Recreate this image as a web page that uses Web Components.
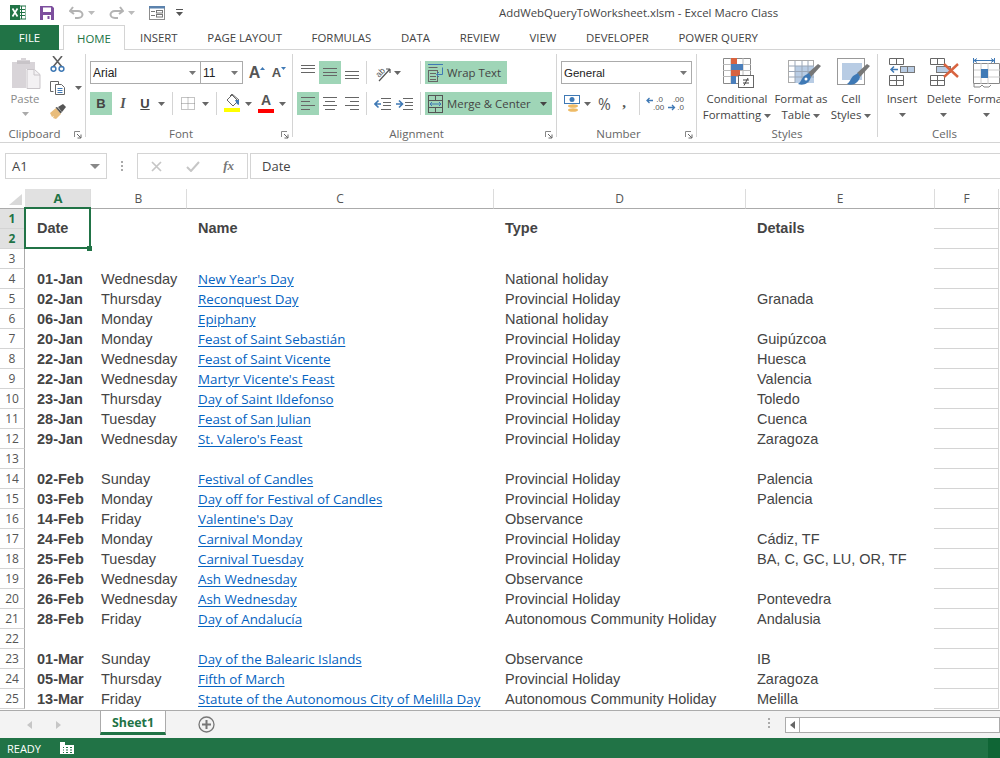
<!DOCTYPE html>
<html><head><meta charset="utf-8"><style>
html,body{margin:0;padding:0;background:#fff}
body{width:1000px;height:758px;overflow:hidden;font-family:"Open Sans","Noto Sans",sans-serif}
xl-app{display:block}
</style></head><body>
<xl-app></xl-app>
<script>
const svg=(w,h,body,extra='')=>`<svg width="${w}" height="${h}" viewBox="0 0 ${w} ${h}" style="display:block;flex:none;${extra}">${body}</svg>`;
const caret=(c='#666')=>svg(7,4,`<path d="M0 0h7L3.5 4z" fill="${c}"/>`);
const lines=(w,arr,c='#666')=>svg(w,16,arr.map(a=>`<rect x="${a[0]}" y="${a[1]}" width="${a[2]}" height="1" fill="${c}"/>`).join(''));
const I={
 excel:svg(16,15,`<rect x="7" y="1" width="9" height="13" fill="#fff" stroke="#217346"/><path d="M8 4.5h7M8 7.5h7M8 10.5h7M11.5 1v13" stroke="#217346" stroke-width="1"/><rect x="0" y="0" width="10" height="15" fill="#217346"/><path d="M2.5 3.5L7.5 11.5M7.5 3.5L2.5 11.5" stroke="#fff" stroke-width="1.7"/>`),
 save:svg(14,14,`<path d="M0 0h12l2 2v12H0z" fill="#7d4f9e"/><rect x="3" y="1.5" width="8" height="4.5" fill="#fff"/><rect x="3" y="9" width="8" height="5" fill="#fff"/><rect x="7.5" y="10" width="2" height="3" fill="#7d4f9e"/>`),
 undo:svg(15,13,`<path d="M4 1L1 5l4 3" fill="none" stroke="#b3b3b3" stroke-width="2"/><path d="M1.5 5H9c3 0 4.500 2 4.500 3.500S12 12 9 12H6" fill="none" stroke="#b3b3b3" stroke-width="2"/>`),
 redo:svg(15,13,`<g transform="matrix(-1 0 0 1 15 0)"><path d="M4 1L1 5l4 3" fill="none" stroke="#b3b3b3" stroke-width="2"/><path d="M1.5 5H9c3 0 4.500 2 4.500 3.500S12 12 9 12H6" fill="none" stroke="#b3b3b3" stroke-width="2"/></g>`),
 form:svg(16,14,`<rect x=".5" y=".5" width="15" height="13" fill="#fff" stroke="#8c8c8c"/><rect x="0" y="0" width="16" height="2.500" fill="#5b82ad"/><path d="M2 5.500h4M2 9.500h4" stroke="#777"/><rect x="7.500" y="4.500" width="6" height="2.500" fill="none" stroke="#777"/><rect x="7.500" y="8.500" width="6" height="2.500" fill="none" stroke="#777"/>`),
 qat:svg(7,8,`<rect width="7" height="1" fill="#555"/><path d="M0 3h7L3.500 7z" fill="#555"/>`),
 launcher:svg(8,8,`<path d="M.5 6V.5H6" fill="none" stroke="#888"/><path d="M3 3l4 4M7 3.500V7H3.500" fill="none" stroke="#666"/>`),
 paste:svg(29,31,`<path d="M0 4h5V2h4V0h5v2h4v2h5v7h-9v19H0z" fill="#d8d4d8"/><path d="M5 3h13v3H5z" fill="#c8c4c8"/><path d="M15 11.500h7.500l5.500 5v14H15z" fill="#f3f1f3" stroke="#c9c5c9"/><path d="M22 11.500v5.500h6" fill="none" stroke="#c9c5c9"/>`),
 cut:svg(15,16,`<path d="M3 0l9 11M12 0L3 11" stroke="#5f5f5f" stroke-width="1.600" fill="none"/><circle cx="3.500" cy="12.800" r="2.400" fill="none" stroke="#3f79b5" stroke-width="1.500"/><circle cx="11.500" cy="12.800" r="2.400" fill="none" stroke="#3f79b5" stroke-width="1.500"/>`),
 copy:svg(16,14,`<path d="M.5.500h8v3M.5.500v10h3" fill="none" stroke="#666"/><path d="M5.500 3.500h6l3 3v7h-9z" fill="#fff" stroke="#666"/><path d="M7.500 7.500h5M7.500 9.500h5M7.500 11.500h5" stroke="#3f79b5"/>`),
 brush:svg(16,15,`<path d="M0 9l6-5 5 6-5 5-3-1 1-2-2 1z" fill="#e9bd7c"/><path d="M5.500 3.500l5 6 1.500-1.500-5-5z" fill="#555"/><path d="M8 3l5-3 3 3-4 5z" fill="#555"/>`),
 borders:svg(14,13,`<path d="M.5.500h13v12H.5zM7 .5v12M.5 6.500h13" fill="none" stroke="#888" stroke-dasharray="1 1"/>`),
 fill:svg(17,20,`<path d="M8 1l6 6-5 5-6-6z" fill="#fff" stroke="#666"/><path d="M6 2l2-2 7 6" fill="none" stroke="#666"/><path d="M11 6h4v5l-2-1z" fill="#3f79b5"/><rect x="0" y="14" width="16" height="4" fill="#ffff00"/>`),
 color:`<div style="font:700 14px 'Liberation Sans';line-height:13px;color:#555;width:16px;text-align:center;border-bottom:4px solid #f00;height:15px;">A</div>`,
 orient:svg(20,18,`<text x="3" y="11" font-family="Liberation Sans" font-size="8.500" fill="#555" transform="rotate(-45 8 9)">ab</text><path d="M6 17L17 5M17 5h-4M17 5v4" fill="none" stroke="#555" stroke-width="1.200"/>`),
 wrap:svg(16,18,`<rect x=".5" y="6.500" width="9" height="11" fill="none" stroke="#666"/><path d="M.5 3.500h9M2 9.500h6M2 12.500h6M2 15.500h6" stroke="#666"/><path d="M0 .5h15" stroke="#3f79b5"/><path d="M14.500 3.500v7H9M11 8l-2.500 2.500L11 13" fill="none" stroke="#3f79b5"/>`),
 merge:svg(15,18,`<rect x=".5" y=".5" width="14" height="17" fill="none" stroke="#555"/><path d="M1 5.500h13M1 12.500h13M7.500 1v4M7.500 13v4" stroke="#555"/><path d="M2 9h11M4 7L2 9l2 2M11 7l2 2-2 2" fill="none" stroke="#3f79b5"/>`),
 indL:svg(17,12,`<path d="M7 .5h10M9 4.500h8M9 7.500h8M7 11.500h10" stroke="#666"/><path d="M7 6H1M4.500 2.500L1 6l3.500 3.500" fill="none" stroke="#3f79b5" stroke-width="1.600"/>`),
 indR:svg(17,12,`<path d="M7 .5h10M9 4.500h8M9 7.500h8M7 11.500h10" stroke="#666"/><path d="M0 6h6M3 2.500L6.500 6 3 9.500" fill="none" stroke="#3f79b5" stroke-width="1.600"/>`),
 acct:svg(17,17,`<rect x=".5" y=".5" width="15" height="8" fill="#fff" stroke="#3f79b5"/><circle cx="8" cy="4.500" r="2.500" fill="#3f79b5"/><ellipse cx="9" cy="11" rx="5" ry="1.800" fill="#eebb66"/><ellipse cx="9" cy="15" rx="5" ry="1.800" fill="#eebb66"/>`),
 incD:`<div style="display:flex;align-items:flex-start;font:8px/8px 'Liberation Sans';color:#555;height:16px"><div style="width:7px;margin-top:1px">${svg(7,7,'<path d="M7 3.500H1M3.500 1L1 3.500 3.500 6" fill="none" stroke="#3f79b5" stroke-width="1.300"/>')}</div><div style="text-align:right;width:10px">.0<br>.00</div></div>`,
 decD:`<div style="display:flex;align-items:flex-start;font:8px/8px 'Liberation Sans';color:#555;height:16px"><div style="width:16px"><div style="text-align:right">.00</div><div style="display:flex;justify-content:space-between">${svg(8,7,'<path d="M0 3.500h6.500M4 1l2.500 2.500L4 6" fill="none" stroke="#3f79b5" stroke-width="1.300"/>')}<span>.0</span></div></div></div>`,
 cf:svg(31,30,`<path d="M.5.500h27v25H.5z" fill="#fff" stroke="#888"/><path d="M8 0v26M20 0v26M0 6.500h28M0 12.500h28M0 18.500h28" stroke="#bbb"/><rect x="8" y="0" width="6" height="6" fill="#d8633f"/><rect x="8" y="6" width="12" height="6" fill="#4a7ebb"/><rect x="8" y="12" width="9" height="6" fill="#d8633f"/><rect x="8" y="18" width="5" height="8" fill="#4a7ebb"/><rect x="15.500" y="17.500" width="15" height="12" fill="#fff" stroke="#666"/><path d="M20 22h6M20 25h6M25 20l-4 7.500" stroke="#444" fill="none"/>`),
 fat:svg(33,30,`<rect x=".5" y="2.500" width="25" height="22" fill="#fff" stroke="#aaa"/><rect x="7" y="8" width="19" height="17" fill="#b8cce4"/><path d="M7 3v22M14 3v22M20 3v22M1 8h25M1 13.500h25M1 19h25" stroke="#9aa7b8"/><path d="M33 8l-3-2-10 9 3 4z" fill="#777"/><path d="M21 15l-5 3c-2 2-3 6-6 8 5 2 11 0 13-7z" fill="#3f79b5"/><circle cx="18" cy="21" r="1.500" fill="#fff"/>`),
 cst:svg(33,30,`<rect x=".5" y=".5" width="27" height="26" fill="#fff" stroke="#999"/><rect x="5" y="5" width="20" height="17" fill="#b8cce4"/><path d="M33 8l-3-2-10 9 3 4z" fill="#777"/><path d="M21 15l-5 3c-2 2-3 6-6 8 5 2 11 0 13-7z" fill="#3f79b5"/>`),
 ins:svg(27,28,`<path d="M.5.500h14v6H.5zM7.500 .5v6M.5 17.500h14v10H.5zM7.500 17.500v10M.5 22.500h14" fill="#fff" stroke="#666"/><rect x="11.500" y="8.500" width="14" height="6" fill="#b8cce4" stroke="#777"/><path d="M18.500 8.500v6" stroke="#777"/><path d="M9 11.500H2M5 8.500l-3 3 3 3" fill="none" stroke="#3f79b5" stroke-width="1.500"/>`),
 del:svg(30,28,`<path d="M.5.500h14v6H.5zM7.500 .5v6M.5 17.500h14v10H.5zM7.500 17.500v10M.5 22.500h14" fill="#fff" stroke="#666"/><rect x="6.500" y="8.500" width="14" height="6" fill="#b8cce4" stroke="#777"/><path d="M14 6l14 13M28 6L14 19" stroke="#d8633f" stroke-width="2.400"/>`),
 fmtc:svg(28,30,`<path d="M.5 0v5M21.500 0v5M1 2.500h20M4 .5L1 2.500l3 2M18 .5l3 2-3 2" fill="none" stroke="#3f79b5"/><path d="M.5 5.500h26v20H.5z" fill="#fff" stroke="#888"/><path d="M8 5v21M15 5v21M1 12h26M1 19h26" stroke="#ccc"/><rect x="8" y="11" width="7" height="9" fill="#3f79b5"/><path d="M1 26v3h6l2-2 2 2h5l2-2" fill="none" stroke="#888"/>`),
 x:svg(11,11,`<path d="M1 1l9 9M10 1l-9 9" stroke="#c6c6c6" stroke-width="1.700"/>`),
 check:svg(14,11,`<path d="M1 6l4 4 8-9" fill="none" stroke="#c6c6c6" stroke-width="2"/>`),
 larrow:svg(5,8,`<path d="M5 0v8L0 4z" fill="#c6c6c6"/>`),
 rarrow:svg(5,8,`<path d="M0 0v8l5-4z" fill="#c6c6c6"/>`),
 plus:svg(17,17,`<circle cx="8.500" cy="8.500" r="7.500" fill="none" stroke="#777" stroke-width="1.300"/><path d="M8.500 4v9M4 8.500h9" stroke="#777" stroke-width="2"/>`),
 status:svg(14,12,`<rect x="0" y="0" width="5" height="3" fill="#fff"/><path d="M0 3h14v9H0z" fill="#fff"/><path d="M3 5.500h1M6 5.500h2M10 5.500h2M3 8h1M6 8h2M10 8h2M3 10.500h1M6 10.500h2M10 10.500h2" stroke="#217346"/>`)
};
function def(name,html,after){customElements.define(name,class extends HTMLElement{constructor(){super();this.attachShadow({mode:'open'}).innerHTML=typeof html==='function'?html(this):html;}connectedCallback(){if(after)after(this)}})}

def('xl-titlebar',`<style>:host{display:flex;height:25px;align-items:center;position:relative;font:11.400px/25px "Open Sans",sans-serif;color:#444}
.i{display:flex;flex:none;align-items:center}.t{position:absolute;left:499px;top:0;white-space:nowrap}</style>
<div class="i" style="margin-left:10px">${I.excel}</div>
<div class="i" style="margin-left:14px">${I.save}</div>
<div class="i" style="margin-left:15px">${I.undo}</div>
<div class="i" style="margin-left:4px">${caret('#bbb')}</div>
<div class="i" style="margin-left:14px">${I.redo}</div>
<div class="i" style="margin-left:4px">${caret('#bbb')}</div>
<div class="i" style="margin-left:14px">${I.form}</div>
<div class="i" style="margin-left:11px">${I.qat}</div>
<div class="t"><slot></slot></div>`);

def('xl-tabs',`<style>:host{display:flex;height:25px;box-sizing:border-box;border-bottom:1px solid #d4d4d4;font:11.400px/25px "Open Sans",sans-serif;color:#444;white-space:nowrap}
.f{width:59px;height:25px;background:#217346;color:#fff;text-align:center;flex:none}
.h{width:62px;margin-left:4px;height:25px;box-sizing:border-box;background:#fff;border:1px solid #d4d4d4;border-bottom:0;color:#217346;text-align:center;flex:none;margin-right:15px}
::slotted(span){margin-right:29.700px}</style>
<div class="f">FILE</div><div class="h">HOME</div><slot></slot>`);

def('xl-group',h=>`<style>:host{display:flex;flex-direction:column;flex:none;box-sizing:border-box;height:83px;border-right:1px solid #d4d4d4;width:${h.getAttribute('w')}px;padding-left:${h.getAttribute('pl')||0}px;position:relative}
.c{flex:1;min-height:0}.l{position:absolute;left:0;right:${h.hasAttribute('launch')?16:0}px;bottom:-5px;text-align:center;font:11.500px/16px "Open Sans",sans-serif;color:#666;white-space:nowrap}
.k{position:absolute;right:3px;bottom:-2px}</style>
<div class="c"><slot></slot></div><div class="l">${h.getAttribute('label')}</div>${h.hasAttribute('launch')?`<div class="k">${I.launcher}</div>`:''}`);

def('xl-btn',h=>`<style>:host{display:flex;flex:none;align-items:center;justify-content:center;height:23px;width:${h.getAttribute('w')||22}px;margin-left:${h.getAttribute('ml')||0}px;${h.hasAttribute('on')?'background:#9fd5b7;':''}color:#444;white-space:nowrap}</style><slot></slot>`);

def('xl-combo',h=>`<style>:host{display:flex;flex:none;box-sizing:border-box;align-items:center;height:23px;width:${h.getAttribute('w')}px;border:1px solid #ababab;background:#fff;padding:0 4px 0 2px;justify-content:space-between;font:${h.getAttribute('f')||'12px'} "Liberation Sans",sans-serif;color:#222;margin-left:${h.getAttribute('ml')||0}px}</style><slot></slot>${caret('#777')}`);

def('xl-big',h=>`<style>:host{display:flex;flex:none;flex-direction:column;align-items:center;width:${h.getAttribute('w')}px;font:11.400px/16px "Open Sans",sans-serif;color:#444;white-space:nowrap;text-align:center}
.i{height:37px;display:flex;align-items:flex-start;padding-top:${h.getAttribute('pt')||4}px;box-sizing:border-box;margin-left:${h.getAttribute('ix')||0}px}
</style><div class="i">${I[h.getAttribute('icon')]}</div><div><slot></slot></div>`);

const cr=caret('#666');
const al={
 top:lines(14,[[0,0,14],[0,3,14],[0,7,14]]),
 mid:lines(14,[[0,3,14],[0,7,14],[0,10,14]]),
 bot:lines(14,[[0,6,14],[0,10,14],[0,13,14]]),
 l:lines(14,[[0,1,14],[0,5,9],[0,9,14],[0,13,9]]),
 c:lines(14,[[0,1,14],[2,5,10],[0,9,14],[2,13,10]]),
 r:lines(14,[[0,1,14],[5,5,9],[0,9,14],[5,13,9]])
};
const div=(ml)=>`<div class="d" style="margin-left:${ml}px"></div>`;
const tc=`<span style="display:inline-block;vertical-align:middle;margin-left:3px">${cr}</span>`;
def('xl-ribbon',`<style>:host{display:flex;height:93px;box-sizing:border-box;border-bottom:1px solid #d4d4d4;padding-top:4px;overflow:hidden;background:#fff}
.r{display:flex;align-items:center;height:23px;font:11.400px "Open Sans",sans-serif;color:#444}
.r1{margin-top:7px}.r2{margin-top:8px}
.d{width:1px;height:23px;background:#d4d4d4;flex:none}
.col{display:flex;flex-direction:column;align-items:center;flex:none;font:11.400px/16px "Open Sans",sans-serif;color:#444}
.flexr{display:flex}
.sm{display:flex;flex-direction:column;flex:none;margin-left:8px;gap:9px;margin-top:2px}
.sm>div{display:flex;align-items:center;height:15px;gap:9px}
.grey{color:#8a8a8a}
.big{font:700 16px "Liberation Sans";color:#555}
b{font:700 13px "Liberation Sans";color:#444}
i{font:italic 700 14px "Liberation Serif";color:#555}
u{font:700 13px "Liberation Sans";color:#444}
.cd{display:flex;justify-content:center;height:16px;align-items:center}
</style>
<xl-group w="86" label="Clipboard" launch>
 <div class="flexr">
  <div class="col grey" style="width:50px"><div style="margin:4px 0 0 3px;height:33px">${I.paste}</div><div>Paste</div><div style="margin-top:5px">${caret('#aaa')}</div></div>
  <div class="sm" style="margin-left:0"><div>${I.cut}</div><div>${I.copy}${cr}</div><div>${I.brush}</div></div>
 </div>
</xl-group>
<xl-group w="207" pl="4" label="Font" launch>
 <div class="r r1"><xl-combo w="111" f="12px">Arial</xl-combo><xl-combo w="43" ml="-1" f="12px">11</xl-combo>
  <xl-btn w="16" ml="6"><span class="big">A</span><span style="margin-top:-9px">${svg(5,3,'<path d="M0 3h5L2.500 0z" fill="#3f79b5"/>')}</span></xl-btn>
  <xl-btn w="16" ml="6"><span class="big" style="font-size:13px">A</span><span style="margin-top:-9px">${svg(5,3,'<path d="M0 0h5L2.500 3z" fill="#3f79b5"/>')}</span></xl-btn></div>
 <div class="r r2"><xl-btn on><b>B</b></xl-btn><xl-btn><i>I</i></xl-btn><xl-btn><u>U</u></xl-btn><xl-btn w="10">${cr}</xl-btn>
  ${div(6)}<xl-btn w="14" ml="8">${I.borders}</xl-btn><xl-btn w="20">${cr}</xl-btn>
  ${div(1)}<xl-btn w="17" ml="7">${I.fill}</xl-btn><xl-btn w="15">${cr}</xl-btn>
  <xl-btn w="16" ml="2">${I.color}</xl-btn><xl-btn w="16">${cr}</xl-btn></div>
</xl-group>
<xl-group w="264" pl="4" label="Alignment" launch>
 <div class="r r1"><xl-btn>${al.top}</xl-btn><xl-btn on>${al.mid}</xl-btn><xl-btn>${al.bot}</xl-btn>
  ${div(3)}<xl-btn w="20" ml="6">${I.orient}</xl-btn><xl-btn w="9">${cr}</xl-btn>
  ${div(18)}<xl-btn w="82" ml="4" on><span style="display:flex;gap:3px;align-items:center;width:100%;padding-left:3px">${I.wrap}Wrap Text</span></xl-btn></div>
 <div class="r r2"><xl-btn on>${al.l}</xl-btn><xl-btn>${al.c}</xl-btn><xl-btn>${al.r}</xl-btn>
  ${div(3)}<xl-btn w="17" ml="7">${I.indL}</xl-btn><xl-btn w="17" ml="5">${I.indR}</xl-btn>
  ${div(7)}<xl-btn w="127" ml="4" on><span style="display:flex;gap:4px;align-items:center;width:100%;padding:0 5px 0 3px;box-sizing:border-box">${I.merge}<span style="flex:1">Merge &amp; Center</span>${caret('#444')}</span></xl-btn></div>
</xl-group>
<xl-group w="140" pl="4" label="Number" launch>
 <div class="r r1"><xl-combo w="131" f="11.500px">General</xl-combo></div>
 <div class="r r2"><xl-btn w="17" ml="3">${I.acct}</xl-btn><xl-btn w="12">${cr}</xl-btn>
  <xl-btn w="15" ml="4"><span style="font:15.500px 'Open Sans';color:#555">%</span></xl-btn>
  <xl-btn w="8" ml="8"><span style="font:900 15px 'Liberation Serif';color:#555;margin-top:-3px">,</span></xl-btn>
  ${div(11)}<xl-btn w="17" ml="6">${I.incD}</xl-btn><xl-btn w="16" ml="5">${I.decD}</xl-btn></div>
</xl-group>
<xl-group w="181" pl="6" label="Styles">
 <div class="flexr">
  <xl-big w="68" icon="cf" ix="2">Conditional<br>Formatting${tc}</xl-big>
  <xl-big w="60" icon="fat" ix="6">Format as<br>Table${tc}</xl-big>
  <xl-big w="40" icon="cst" ix="5">Cell<br>Styles${tc}</xl-big>
 </div>
</xl-group>
<xl-group w="134" pl="4" label="Cells">
 <div class="flexr">
  <xl-big w="40" icon="ins" ix="1">Insert<div class="cd">${cr}</div></xl-big>
  <xl-big w="40" icon="del" ix="1" style="margin-left:2px">Delete<div class="cd">${cr}</div></xl-big>
  <xl-big w="42" icon="fmtc" style="margin-left:2px">Format<div class="cd">${cr}</div></xl-big>
 </div>
</xl-group>`);

def('xl-formula',`<style>:host{display:flex;height:46px;box-sizing:border-box;padding:10px 0 10px 5px;align-items:stretch;font:13px "Open Sans",sans-serif;color:#444}
.b{box-sizing:border-box;height:26px;border:1px solid #d4d4d4;display:flex;align-items:center;flex:none}
.n{width:102px;padding:0 6px;justify-content:space-between}
.dots{width:30px;display:flex;flex-direction:column;align-items:center;justify-content:center;gap:2px;flex:none}
.dots s{width:2px;height:2px;background:#aaa}
.fx{width:111px;justify-content:space-between;padding:0 13px;}
fxi{font:italic 700 13px "Liberation Serif";color:#777}
.v{flex:1;margin-left:2px;padding-left:11px;border-right:0}</style>
<div class="b n">A1${svg(10,5,'<path d="M0 0h10L5 5z" fill="#888"/>')}</div>
<div class="dots"><s></s><s></s><s></s></div>
<div class="b fx">${I.x}${I.check}<fxi>fx</fxi></div>
<div class="b v"><slot></slot></div>`);

const C=['A','B','C','D','E','F'];
const W=[65,96,307,252,189,64];
const D=[
 [4,'01-Jan','Wednesday',"New Year's Day",'National holiday',''],
 [5,'02-Jan','Thursday','Reconquest Day','Provincial Holiday','Granada'],
 [6,'06-Jan','Monday','Epiphany','National holiday',''],
 [7,'20-Jan','Monday','Feast of Saint Sebastián','Provincial Holiday','Guipúzcoa'],
 [8,'22-Jan','Wednesday','Feast of Saint Vicente','Provincial Holiday','Huesca'],
 [9,'22-Jan','Wednesday',"Martyr Vicente's Feast",'Provincial Holiday','Valencia'],
 [10,'23-Jan','Thursday','Day of Saint Ildefonso','Provincial Holiday','Toledo'],
 [11,'28-Jan','Tuesday','Feast of San Julian','Provincial Holiday','Cuenca'],
 [12,'29-Jan','Wednesday',"St. Valero's Feast",'Provincial Holiday','Zaragoza'],
 [13],
 [14,'02-Feb','Sunday','Festival of Candles','Provincial Holiday','Palencia'],
 [15,'03-Feb','Monday','Day off for Festival of Candles','Provincial Holiday','Palencia'],
 [16,'14-Feb','Friday',"Valentine's Day",'Observance',''],
 [17,'24-Feb','Monday','Carnival Monday','Provincial Holiday','Cádiz, TF'],
 [18,'25-Feb','Tuesday','Carnival Tuesday','Provincial Holiday','BA, C, GC, LU, OR, TF'],
 [19,'26-Feb','Wednesday','Ash Wednesday','Observance',''],
 [20,'26-Feb','Wednesday','Ash Wednesday','Provincial Holiday','Pontevedra'],
 [21,'28-Feb','Friday','Day of Andalucía','Autonomous Community Holiday','Andalusia'],
 [22],
 [23,'01-Mar','Sunday','Day of the Balearic Islands','Observance','IB'],
 [24,'05-Mar','Thursday','Fifth of March','Provincial Holiday','Zaragoza'],
 [25,'13-Mar','Friday','Statute of the Autonomous City of Melilla Day','Autonomous Community Holiday','Melilla']
];
let cells='';
cells+=`<div class="hd corner">${svg(13,11,'<path d="M13 0v11H0z" fill="#d9d9d9"/>','position:absolute;left:9px;top:5px')}</div>`;
C.forEach((c,i)=>cells+=`<div class="hd ch ${i==0?'on':''}">${c}</div>`);
cells+=`<div class="hd ch tail"></div>`;
cells+=`<div class="rh on">1</div><div class="c bold hdr" style="grid-row:span 2;grid-column:2">Date</div><div class="c" style="grid-row:span 2"></div><div class="c bold hdr p12" style="grid-row:span 2">Name</div><div class="c bold hdr p12" style="grid-row:span 2">Type</div><div class="c bold hdr p12" style="grid-row:span 2">Details</div><div class="f"></div><div class="g"></div>`;
cells+=`<div class="rh on" style="grid-column:1">2</div><div class="f" style="grid-column:7"></div><div class="g"></div>`;
cells+=`<div class="rh">3</div><div class="c" style="grid-column:span 5"></div><div class="f"></div><div class="g"></div>`;
D.forEach(r=>{
 cells+=`<div class="rh">${r[0]}</div>`;
 if(r.length==1){cells+=`<div class="c" style="grid-column:span 5"></div>`}
 else cells+=`<div class="c bold">${r[1]}</div><div class="c pb">${r[2]}</div><div class="c p12 lk"><a>${r[3]}</a></div><div class="c p12">${r[4]}</div><div class="c p12">${r[5]}</div>`;
 cells+=`<div class="f"></div><div class="g"></div>`;
});
def('xl-sheet',`<style>:host{display:block;height:521px;overflow:hidden;position:relative;background:#fff;font:14.500px "Liberation Sans",sans-serif;color:#444}
.g0{display:grid;grid-template-columns:25px ${W.join('px ')}px 2px;grid-auto-rows:20px;grid-template-rows:20px}
.hd{background:#fff;border-bottom:1px solid #ababab;box-sizing:border-box;position:relative}
.ch{font:12px/19px "Open Sans",sans-serif;color:#555;text-align:center;border-left:1px solid #dcdcdc}
.ch.on{background:#e1e1e1;color:#217346;font-weight:700;font-size:13px;border-left-color:#e1e1e1}
.rh{box-sizing:border-box;border-bottom:1px solid #d4d4d4;border-right:1px solid #ababab;font:12px/19px "Open Sans",sans-serif;color:#555;text-align:center}
.rh.on{background:#e1e1e1;color:#217346;font-weight:700;border-right-color:#ababab}
.c{line-height:20px;padding-left:12px;white-space:nowrap;overflow:visible;min-width:0}
.pb{padding-left:11px}
.bold{font-weight:700}
.hdr{line-height:38px}
.lk{font:13.350px/21px "Open Sans",sans-serif;color:#0563c1}
.lk a{text-decoration:underline;text-underline-offset:2px}
.f{box-sizing:border-box;border-bottom:1px solid #d4d4d4;}
.g{box-sizing:border-box;border-left:1px solid #d4d4d4;}
.sel{position:absolute;left:24px;top:18px;width:67px;height:42px;box-sizing:border-box;border:2px solid #217346}
.hdl{position:absolute;left:87px;top:57px;width:5px;height:5px;background:#217346}
</style><div class="g0">${cells}</div><div class="sel"></div><div class="hdl"></div>`);

def('xl-sheetbar',`<style>:host{display:flex;height:28px;box-sizing:border-box;border-top:1px solid #ababab;background:#f3f3f3;align-items:flex-start;position:relative}
.a{flex:none;margin-top:10px}
.tab{flex:none;box-sizing:border-box;width:66px;height:25px;margin-left:39px;margin-top:-1px;background:#fff;border:1px solid #ababab;border-bottom:3px solid #217346;color:#217346;font:700 12.400px/23px "Open Sans",sans-serif;text-align:center}
.p{flex:none;margin-left:32px;margin-top:5px}
.dots{margin-left:auto;display:flex;flex-direction:column;gap:2px;margin-top:7px;margin-right:15px}
.dots s{width:2px;height:2px;background:#aaa;display:block}
.sb{flex:none;width:215px;height:16px;box-sizing:border-box;border:1px solid #ababab;background:#fff;margin-top:6px;display:flex}
.sb div{width:14px;box-sizing:border-box;border-right:1px solid #ababab;display:flex;align-items:center;justify-content:center}
</style><div class="a" style="margin-left:27px">${I.larrow}</div><div class="a" style="margin-left:24px">${I.rarrow}</div>
<div class="tab"><slot></slot></div><div class="p">${I.plus}</div>
<div class="dots"><s></s><s></s><s></s></div>
<div class="sb"><div>${svg(5,8,'<path d="M5 0v8L0 4z" fill="#666"/>')}</div></div>`);

def('xl-status',`<style>:host{display:flex;height:20px;background:#217346;color:#fff;align-items:center;font:11px "Open Sans",sans-serif;padding-left:7px;position:relative}
.i{margin-left:19px}.e{margin-left:auto;width:12px;height:20px;background:#0f6535}</style><slot></slot><div class="i">${I.status}</div><div class="e"></div>`);

def('xl-app',`<style>:host{display:flex;flex-direction:column;width:1000px;height:758px;overflow:hidden;background:#fff}</style>
<xl-titlebar>AddWebQueryToWorksheet.xlsm - Excel Macro Class</xl-titlebar>
<xl-tabs><span>INSERT</span><span>PAGE LAYOUT</span><span>FORMULAS</span><span>DATA</span><span>REVIEW</span><span>VIEW</span><span>DEVELOPER</span><span>POWER QUERY</span></xl-tabs>
<xl-ribbon></xl-ribbon>
<xl-formula>Date</xl-formula>
<xl-sheet></xl-sheet>
<xl-sheetbar>Sheet1</xl-sheetbar>
<xl-status>READY</xl-status>`);
</script>
</body></html>
